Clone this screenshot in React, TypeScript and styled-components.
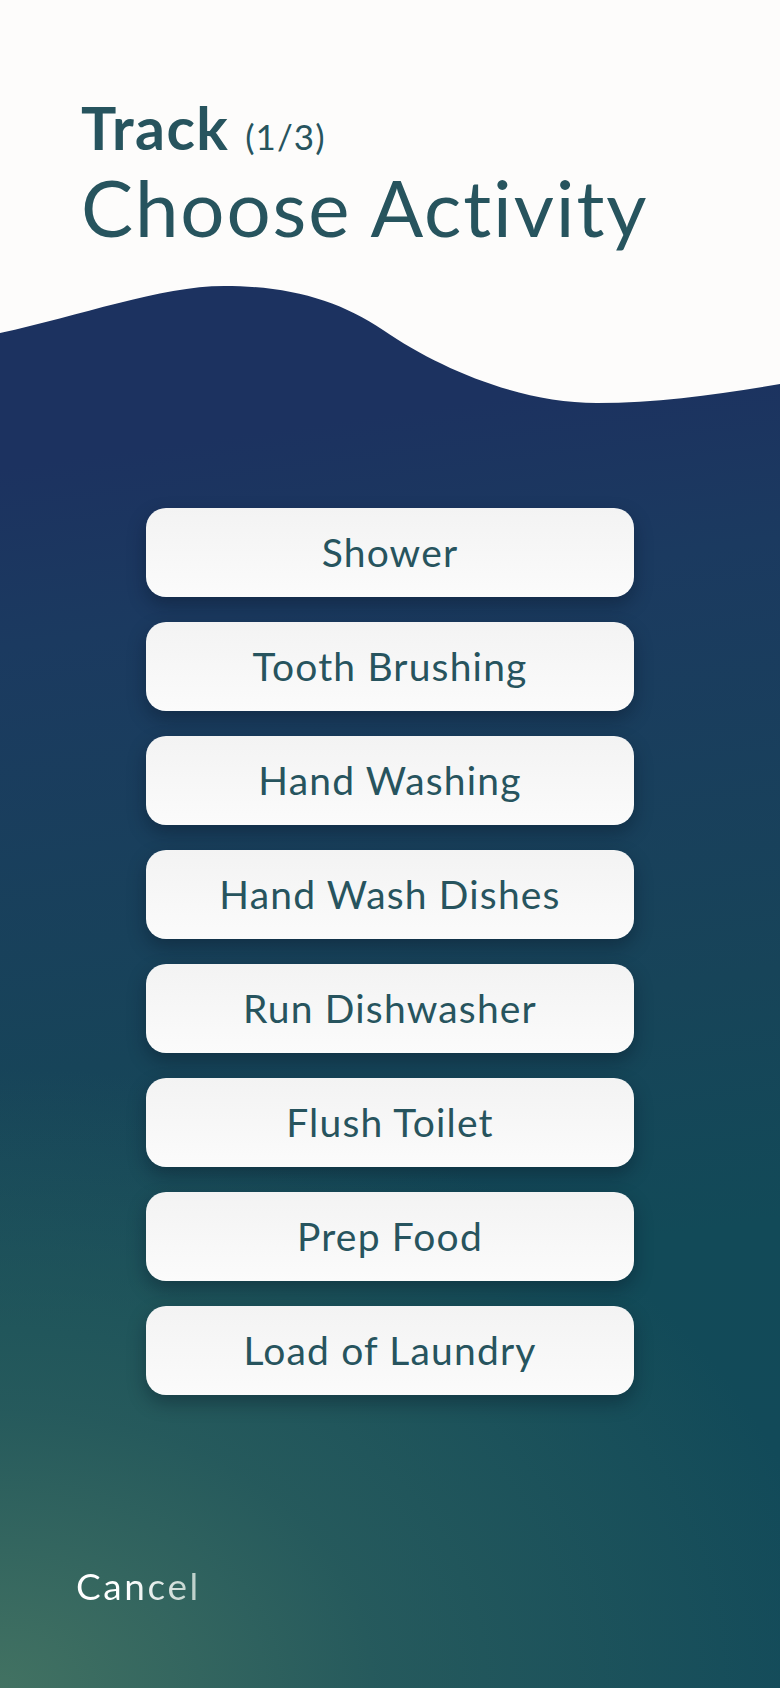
import React from 'react';
import styled, { createGlobalStyle } from 'styled-components';

const activities = [
	'Shower',
	'Tooth Brushing',
	'Hand Washing',
	'Hand Wash Dishes',
	'Run Dishwasher',
	'Flush Toilet',
	'Prep Food',
	'Load of Laundry',
];

const GlobalStyle = createGlobalStyle`
	html, body {
		margin: 0;
		padding: 0;
	}

	body {
		font-family: Lato, 'Noto Sans', sans-serif;
	}
`;

function Wave() {
	return (
		<WaveSvg viewBox="0 0 780 118" preserveAspectRatio="none">
			<path
				d="M0,0 L0,47 C80,30 160,0 224,0 C290,0 340,15 383,44 C440,83 520,117 597,117 C660,117 720,108 780,98 L780,0 Z"
				fill="#fdfcfb"
			/>
		</WaveSvg>
	);
}

function App() {
	return (
		<>
			<GlobalStyle />
			<Screen>
				<Header>
					<Step>
						Track <small>(1/3)</small>
					</Step>
					<Title>Choose Activity</Title>
				</Header>
				<Wave />
				<ActivityList>
					{activities.map((name) => (
						<ActivityButton key={name}>{name}</ActivityButton>
					))}
				</ActivityList>
				<Footer>
					<CancelButton>Cancel</CancelButton>
				</Footer>
			</Screen>
		</>
	);
}

const Screen = styled.div`
	min-height: 1688px;
	display: flex;
	flex-direction: column;
	background-color: #1c3260;
	background-image: radial-gradient(
			840px 620px at 0% 100%,
			rgba(66, 114, 98, 1) 0%,
			rgba(48, 98, 94, 0.65) 45%,
			rgba(20, 75, 88, 0) 100%
		),
		linear-gradient(
			172deg,
			#1c3260 0%,
			#1c3260 26%,
			#1b3a60 36%,
			#174459 60%,
			#124a58 74%,
			#124a5a 100%
		);
`;

const Header = styled.header`
	height: 286px;
	box-sizing: border-box;
	padding: 98px 0 0 81px;
	background: #fdfcfb;
	color: #27545e;
`;

const Step = styled.div`
	font-size: 59px;
	line-height: 1;
	font-weight: 700;
	letter-spacing: 0.025em;

	small {
		font-size: 35px;
		font-weight: 400;
		letter-spacing: 0.03em;
	}
`;

const Title = styled.h1`
	margin: 11px 0 0;
	font-size: 78px;
	line-height: 1;
	font-weight: 400;
	letter-spacing: 0.024em;
`;

const WaveSvg = styled.svg`
	display: block;
	width: 100%;
	height: 118px;
`;

const ActivityList = styled.div`
	margin-top: 104px;
	display: flex;
	flex-direction: column;
	align-items: center;
	gap: 25px;
`;

const ActivityButton = styled.button`
	width: 488px;
	height: 89px;
	border: none;
	border-radius: 20px;
	background: linear-gradient(180deg, #f3f3f3 0%, #fbfbfb 100%);
	box-shadow: 0 8px 18px rgba(5, 15, 30, 0.34);
	color: #27545e;
	font-family: Lato, 'Noto Sans', sans-serif;
	font-size: 39px;
	line-height: 1;
	letter-spacing: 0.03em;
	cursor: pointer;
`;

const Footer = styled.footer`
	margin-top: 172px;
	padding-left: 76px;
`;

const CancelButton = styled.button`
	padding: 0;
	border: none;
	background: linear-gradient(90deg, #ffffff 40%, #b9cdc7 100%);
	-webkit-background-clip: text;
	background-clip: text;
	color: transparent;
	font-family: Lato, 'Noto Sans', sans-serif;
	font-size: 37px;
	line-height: 1;
	letter-spacing: 0.07em;
	cursor: pointer;
`;

export default App;
